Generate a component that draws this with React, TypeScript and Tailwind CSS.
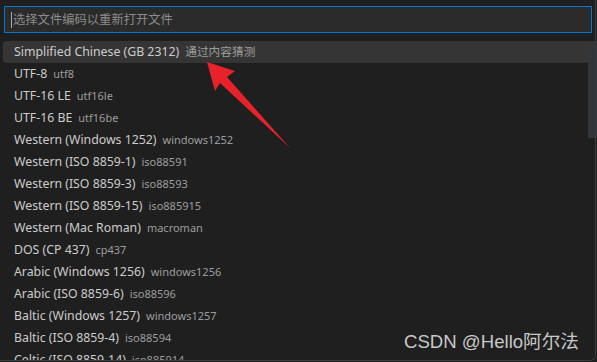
import React from "react";

const rows: [string, string][] = [
  ["Simplified Chinese (GB 2312)", "通过内容猜测"],
  ["UTF-8", "utf8"],
  ["UTF-16 LE", "utf16le"],
  ["UTF-16 BE", "utf16be"],
  ["Western (Windows 1252)", "windows1252"],
  ["Western (ISO 8859-1)", "iso88591"],
  ["Western (ISO 8859-3)", "iso88593"],
  ["Western (ISO 8859-15)", "iso885915"],
  ["Western (Mac Roman)", "macroman"],
  ["DOS (CP 437)", "cp437"],
  ["Arabic (Windows 1256)", "windows1256"],
  ["Arabic (ISO 8859-6)", "iso88596"],
  ["Baltic (Windows 1257)", "windows1257"],
  ["Baltic (ISO 8859-4)", "iso88594"],
  ["Celtic (ISO 8859-14)", "iso885914"],
];

const font = { fontFamily: '"Noto Sans", "Noto Sans CJK SC", sans-serif' };

export default function App() {
  return (
    <div
      className="relative w-[597px] h-[362px] overflow-hidden bg-[#1f1f1f]"
      style={font}
    >
      <div className="h-[361px] w-[596px] border-b border-r border-[#3c3c3c] rounded-br-[6px] overflow-hidden flex flex-col">
        <div className="ml-[4px] mt-[6px] w-[588px] h-[27px] shrink-0 border border-[#0078d4] bg-[#2b2b2b] flex items-center pl-[6px]">
          <div className="w-[1px] h-[16px] bg-[#aeafad]" />
          <span
            className="text-[12.3px] leading-none text-[#8b8b8b] ml-[1px]"
            style={{ fontFamily: '"Noto Sans CJK SC", sans-serif' }}
          >
            选择文件编码以重新打开文件
          </span>
        </div>
        <div className="mt-[8px] flex flex-col pl-[3px]">
          {rows.map(([label, desc], i) => (
            <div
              key={i}
              className={
                "h-[22px] shrink-0 flex items-center pl-[11px] w-[586px] rounded-[3px] " +
                (i === 0 ? "bg-[#353535]" : "")
              }
            >
              <span className="text-[12.3px] text-[#cccccc] whitespace-nowrap">{label}</span>
              <span
                className={
                  "ml-[6px] text-[#9d9d9d] whitespace-nowrap " +
                  (i === 0 ? "text-[11.7px]" : "text-[11px]")
                }
              >
                {desc}
              </span>
            </div>
          ))}
        </div>
      </div>
      <div className="absolute left-[588px] top-[41px] w-[9px] h-[97px] bg-[#35383c] opacity-90" />
      <svg
        className="absolute left-0 top-0"
        width="597"
        height="362"
        viewBox="0 0 597 362"
      >
        <polygon
          points="207,62 235,71 227,77 290,148 220,83 215,91"
          fill="#e8222b"
        />
      </svg>
      <div
        className="absolute left-[404px] top-[330px] text-[18.6px] leading-[24px] text-[#c8c8c8] whitespace-nowrap"
        style={{ fontFamily: '"Liberation Sans", "Noto Sans CJK SC", sans-serif' }}
      >
        CSDN @Hello阿尔法
      </div>
    </div>
  );
}
